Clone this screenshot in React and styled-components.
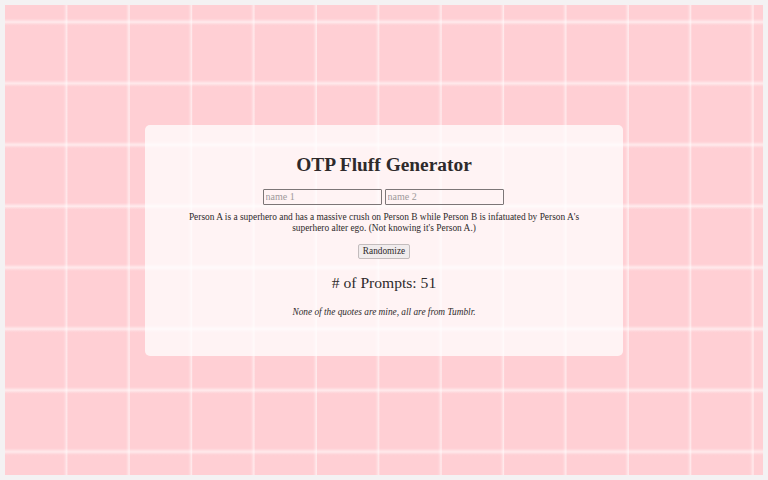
import React, { useState } from 'react';
import styled, { createGlobalStyle } from 'styled-components';

const GlobalStyle = createGlobalStyle`
  html, body {
    margin: 0;
    padding: 0;
    background: #f4f2f3;
  }
  body {
    font-family: "Liberation Serif", "Times New Roman", serif;
    color: #333;
  }
`;

const Frame = styled.div`
  padding: 5px;
  height: 480px;
  box-sizing: border-box;
`;

// pink plaid backdrop with soft white stripes
const Plaid = styled.div`
  height: 100%;
  display: flex;
  align-items: center;
  justify-content: center;
  background-color: #ffcfd4;
  background-image:
    linear-gradient(to right,
      transparent 58.5px,
      rgba(255, 255, 255, 0.2) 60px,
      rgba(255, 255, 255, 0.6) 62px,
      rgba(255, 255, 255, 0.2) 64px,
      transparent 65.5px),
    linear-gradient(to bottom,
      transparent 13.5px,
      rgba(255, 255, 255, 0.2) 15px,
      rgba(255, 255, 255, 0.6) 17px,
      rgba(255, 255, 255, 0.2) 19px,
      transparent 20.5px);
  background-size: 62.4px 100%, 100% 61.4px;
`;

const Card = styled.div`
  width: 478px;
  height: 231px;
  box-sizing: border-box;
  padding-top: 28px;
  border-radius: 5px;
  background: rgba(255, 255, 255, 0.75);
  display: flex;
  flex-direction: column;
  align-items: center;
  text-align: center;
`;

const Title = styled.h1`
  margin: 0;
  font-size: 19.4px;
  line-height: 24px;
  font-weight: bold;
  color: #2e2a2b;
`;

const Names = styled.div`
  display: flex;
  gap: 3px;
  margin: 12px 2px 0 0;
`;

const NameInput = styled.input`
  width: 119px;
  height: 16px;
  box-sizing: border-box;
  padding: 0 2px;
  border: 1px solid #7c7677;
  border-radius: 1px;
  background: transparent;
  font-family: inherit;
  font-size: 10px;
  color: #333;
  outline: none;
  &::placeholder {
    color: #a09a9b;
  }
`;

const Prompt = styled.p`
  width: 400px;
  margin: 7px 0 0;
  font-size: 9.4px;
  line-height: 11px;
  color: #2e2a2b;
`;

const RandomButton = styled.button`
  margin-top: 10px;
  height: 15px;
  padding: 0 4px;
  border: 1px solid #c3bcbd;
  border-radius: 2px;
  background: #f1eced;
  font-family: inherit;
  font-size: 9.3px;
  line-height: 13px;
  color: #2e2a2b;
  cursor: pointer;
`;

const Count = styled.div`
  margin-top: 14px;
  font-size: 15.6px;
  line-height: 20px;
  color: #2e2a2b;
`;

const Note = styled.em`
  margin-top: 13px;
  font-size: 9.3px;
  line-height: 12px;
  color: #2e2a2b;
`;

export default function App() {
  const [nameA, setNameA] = useState('');
  const [nameB, setNameB] = useState('');

  return (
    <>
      <GlobalStyle />
      <Frame>
        <Plaid>
          <Card>
            <Title>OTP Fluff Generator</Title>
            <Names>
              <NameInput placeholder="name 1" value={nameA} onChange={e => setNameA(e.target.value)} />
              <NameInput placeholder="name 2" value={nameB} onChange={e => setNameB(e.target.value)} />
            </Names>
            <Prompt>
              Person A is a superhero and has a massive crush on Person B while Person B is infatuated by Person A's superhero alter ego. (Not knowing it's Person A.)
            </Prompt>
            <RandomButton>Randomize</RandomButton>
            <Count># of Prompts: 51</Count>
            <Note>None of the quotes are mine, all are from Tumblr.</Note>
          </Card>
        </Plaid>
      </Frame>
    </>
  );
}
